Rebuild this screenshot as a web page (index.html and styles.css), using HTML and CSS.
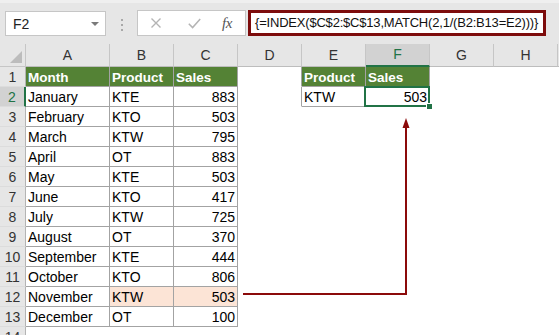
FILE: index.html
```html
<!DOCTYPE html>
<html>
<head>
<meta charset="utf-8">
<link rel="stylesheet" href="styles.css">
</head>
<body>
<div class="toolbar">
  <div class="namebox"><span class="name">F2</span><span class="caret"></span></div>
  <div class="dots"><i></i><i></i><i></i></div>
  <div class="fxbox">
    <svg class="ico-x" width="10" height="10" viewBox="0 0 10 10"><path d="M0.5 0.5 L9.5 9.5 M9.5 0.5 L0.5 9.5" stroke="#b4b4b4" stroke-width="1.4" fill="none"/></svg>
    <svg class="ico-ok" width="13" height="11" viewBox="0 0 13 11"><path d="M0.8 5.8 L4.6 9.6 L12.2 1" stroke="#b4b4b4" stroke-width="1.5" fill="none"/></svg>
    <span class="fx">fx</span>
  </div>
  <div class="formula">{=INDEX($C$2:$C$13,MATCH(2,1/(B2:B13=E2)))}</div>
</div>
<div class="sheet">
  <div class="corner"><span class="tri"></span></div>
  <div class="ch">A</div><div class="ch">B</div><div class="ch">C</div><div class="ch">D</div><div class="ch">E</div><div class="ch sel">F</div><div class="ch">G</div><div class="ch">H</div><div class="ch"></div>

  <div class="rh">1</div>
  <div class="c t g">Month</div><div class="c t g">Product</div><div class="c t g">Sales</div><div class="c edge"></div><div class="c t g">Product</div><div class="c t g">Sales</div><div class="c"></div><div class="c"></div><div class="c"></div>

  <div class="rh sel">2</div>
  <div class="c t">January</div><div class="c t">KTE</div><div class="c t n">883</div><div class="c edge"></div><div class="c t">KTW</div><div class="c t n">503</div><div class="c"></div><div class="c"></div><div class="c"></div>

  <div class="rh">3</div>
  <div class="c t">February</div><div class="c t">KTO</div><div class="c t n">503</div><div class="c"></div><div class="c"></div><div class="c"></div><div class="c"></div><div class="c"></div><div class="c"></div>

  <div class="rh">4</div>
  <div class="c t">March</div><div class="c t">KTW</div><div class="c t n">795</div><div class="c"></div><div class="c"></div><div class="c"></div><div class="c"></div><div class="c"></div><div class="c"></div>

  <div class="rh">5</div>
  <div class="c t">April</div><div class="c t">OT</div><div class="c t n">883</div><div class="c"></div><div class="c"></div><div class="c"></div><div class="c"></div><div class="c"></div><div class="c"></div>

  <div class="rh">6</div>
  <div class="c t">May</div><div class="c t">KTE</div><div class="c t n">503</div><div class="c"></div><div class="c"></div><div class="c"></div><div class="c"></div><div class="c"></div><div class="c"></div>

  <div class="rh">7</div>
  <div class="c t">June</div><div class="c t">KTO</div><div class="c t n">417</div><div class="c"></div><div class="c"></div><div class="c"></div><div class="c"></div><div class="c"></div><div class="c"></div>

  <div class="rh">8</div>
  <div class="c t">July</div><div class="c t">KTW</div><div class="c t n">725</div><div class="c"></div><div class="c"></div><div class="c"></div><div class="c"></div><div class="c"></div><div class="c"></div>

  <div class="rh">9</div>
  <div class="c t">August</div><div class="c t">OT</div><div class="c t n">370</div><div class="c"></div><div class="c"></div><div class="c"></div><div class="c"></div><div class="c"></div><div class="c"></div>

  <div class="rh">10</div>
  <div class="c t">September</div><div class="c t">KTE</div><div class="c t n">444</div><div class="c"></div><div class="c"></div><div class="c"></div><div class="c"></div><div class="c"></div><div class="c"></div>

  <div class="rh">11</div>
  <div class="c t">October</div><div class="c t">KTO</div><div class="c t n">806</div><div class="c"></div><div class="c"></div><div class="c"></div><div class="c"></div><div class="c"></div><div class="c"></div>

  <div class="rh">12</div>
  <div class="c t">November</div><div class="c t hl">KTW</div><div class="c t n hl">503</div><div class="c"></div><div class="c"></div><div class="c"></div><div class="c"></div><div class="c"></div><div class="c"></div>

  <div class="rh">13</div>
  <div class="c t">December</div><div class="c t">OT</div><div class="c t n">100</div><div class="c"></div><div class="c"></div><div class="c"></div><div class="c"></div><div class="c"></div><div class="c"></div>

  <div class="rh">14</div>
  <div class="c"></div><div class="c"></div><div class="c"></div><div class="c"></div><div class="c"></div><div class="c"></div><div class="c"></div><div class="c"></div><div class="c"></div>
</div>

<div class="selection"><span class="handle"></span></div>

<svg class="arrow" width="559" height="335" viewBox="0 0 559 335">
  <path d="M243 294 L406 294 L406 126" stroke="#8b0a0a" stroke-width="2" fill="none"/>
  <path d="M402.5 128 L406 118 L409.5 128 Z" fill="#8b0a0a"/>
</svg>
</body>
</html>
```

FILE: styles.css
```css
html, body {
  margin: 0;
  padding: 0;
}
body {
  width: 559px;
  height: 335px;
  overflow: hidden;
  position: relative;
  background: #ffffff;
  font-family: "Liberation Sans", Arial, sans-serif;
  font-size: 14px;
  color: #000;
}

/* ---------- formula toolbar ---------- */
.toolbar {
  height: 44px;
  box-sizing: border-box;
  background: #e6e6e6;
  border-top: 3px solid #efefef;
  display: flex;
  align-items: flex-start;
  padding: 8px 0 0 5px;
}
.namebox {
  width: 101px;
  height: 25px;
  box-sizing: border-box;
  background: #fff;
  border: 1px solid #c6c6c6;
  display: flex;
  align-items: center;
  padding-left: 7px;
  position: relative;
}
.name {
  font-size: 14px;
  color: #222;
  flex: 1;
}
.caret {
  width: 0;
  height: 0;
  border-left: 4px solid transparent;
  border-right: 4px solid transparent;
  border-top: 4px solid #7a7a7a;
  margin-right: 6px;
}
.dots {
  width: 2px;
  margin: 8px 0 0 15px;
  display: flex;
  flex-direction: column;
  gap: 3px;
}
.dots i {
  display: block;
  width: 2px;
  height: 2px;
  background: #a8a8a8;
}
.fxbox {
  width: 109px;
  height: 26px;
  box-sizing: border-box;
  margin-left: 14px;
  margin-top: -1px;
  background: #fff;
  border: 1px solid #c6c6c6;
  display: flex;
  align-items: center;
  padding-left: 13px;
}
.ico-x {
  display: block;
}
.ico-ok {
  display: block;
  margin-left: 27px;
}
.fx {
  font-family: "Liberation Serif", "Times New Roman", serif;
  font-style: italic;
  font-size: 15px;
  color: #555;
  margin-left: 21px;
  letter-spacing: -0.5px;
}
.formula {
  width: 298px;
  height: 26px;
  box-sizing: border-box;
  margin-left: 2px;
  margin-top: -1px;
  background: #fff;
  border: 3px solid #7d0c0c;
  font-size: 13px;
  letter-spacing: -0.2px;
  line-height: 20px;
  padding-left: 4px;
  color: #111;
  white-space: nowrap;
  overflow: hidden;
}

/* ---------- sheet grid ---------- */
.sheet {
  display: grid;
  grid-template-columns: 26px 84px repeat(7, 64px) 1fr;
  grid-template-rows: 23px repeat(14, 20px);
}
.sheet > div {
  box-sizing: border-box;
  overflow: hidden;
  white-space: nowrap;
}
.corner {
  background: #e6e6e6;
  border-right: 1px solid #c6c6c6;
  border-bottom: 1px solid #c6c6c6;
  position: relative;
}
.tri {
  position: absolute;
  right: 3px;
  bottom: 3px;
  width: 0;
  height: 0;
  border-left: 12px solid transparent;
  border-bottom: 12px solid #bcbcbc;
}
.ch {
  background: #e6e6e6;
  border-right: 1px solid #c6c6c6;
  border-bottom: 1px solid #bdbdbd;
  text-align: center;
  color: #333;
  font-size: 14px;
  line-height: 22px;
}
.ch.sel {
  background: #d2d2d2;
  color: #217346;
  border-bottom: 2px solid #217346;
  line-height: 21px;
}
.rh {
  background: #e6e6e6;
  border-right: 1px solid #b4b4b4;
  border-bottom: 1px solid #dcdcdc;
  text-align: center;
  color: #333;
  font-size: 14px;
  line-height: 17px;
  padding-top: 2px;
}
.rh.sel {
  background: #d2d2d2;
  color: #217346;
  border-right: 2px solid #217346;
}
.c {
  border-right: 1px solid transparent;
  border-bottom: 1px solid transparent;
  line-height: 17px;
  padding: 2px 2px 0 2px;
}
.c.t {
  border-right-color: #a3a3a3;
  border-bottom-color: #a3a3a3;
}
.c.edge {
  border-right-color: #a3a3a3;
}
.c.g {
  background: #548235;
  color: #fff;
  font-weight: bold;
  font-size: 13.5px;
}
.c.n {
  text-align: right;
}
.c.hl {
  background: #fce4d6;
}

/* ---------- overlays ---------- */
.selection {
  position: absolute;
  left: 364px;
  top: 86px;
  width: 66px;
  height: 21px;
  box-sizing: border-box;
  border: 2px solid #217346;
}
.handle {
  position: absolute;
  right: -5px;
  bottom: -5px;
  width: 5px;
  height: 5px;
  background: #217346;
  border: 1px solid #fff;
}
.arrow {
  position: absolute;
  left: 0;
  top: 0;
  pointer-events: none;
}
```
